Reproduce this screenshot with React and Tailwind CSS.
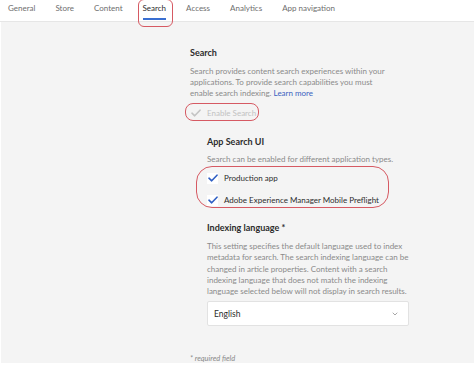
import { ChevronDown } from 'lucide-react';

const tabs = ['General', 'Store', 'Content', 'Search', 'Access', 'Analytics', 'App navigation'];

export default function App() {
    return (
        <div className="relative h-[366px] w-[474px] overflow-hidden bg-white text-[#2c2c2c]" style={{ fontFamily: 'Lato, "Open Sans", sans-serif' }}>
            <nav className="flex h-[22px] gap-[20px] border-b border-[#e6e6e6] pl-[8px] text-[8px] text-[#6e6e6e]">
                {tabs.map((tab) => (
                    <div key={tab} className="relative pt-[2px] leading-[12px]">
                        <span className={tab === 'Search' ? 'text-[#2c2c2c]' : ''}>{tab}</span>
                        {tab === 'Search' && <div className="absolute left-0 right-0 top-[18px] h-[2px] bg-[#3a6fd1]" />}
                    </div>
                ))}
            </nav>

            <main className="ml-[1px] h-[341px] bg-[#f4f4f4] pl-[189px] pt-[25px] text-[8px]">
                <h3 className="text-[9px] font-bold leading-[12px]">Search</h3>
                <p className="mt-[7px] leading-[11px] text-[#8a8a8a]">
                    Search provides content search experiences within your<br />
                    applications. To provide search capabilities you must<br />
                    enable search indexing. <span className="text-[#3b62c0]">Learn more</span>
                </p>
                <Check disabled label="Enable Search" className="mt-[8px]" />

                <div className="ml-[17px]">
                    <h4 className="mt-[17px] text-[9px] font-bold leading-[12px]">App Search UI</h4>
                    <p className="mt-[6px] leading-[11px] text-[#8a8a8a]">Search can be enabled for different application types.</p>
                    <Check label="Production app" className="mt-[7px]" />
                    <Check label="Adobe Experience Manager Mobile Preflight" className="mt-[10px]" />

                    <h4 className="mt-[16px] text-[9px] font-bold leading-[12px]">Indexing language *</h4>
                    <p className="mt-[7px] leading-[11.3px] text-[#8a8a8a]">
                        This setting specifies the default language used to index<br />
                        metadata for search. The search indexing language can be<br />
                        changed in article properties. Content with a search<br />
                        indexing language that does not match the indexing<br />
                        language selected below will not display in search results.
                    </p>
                    <div className="mt-[4px] flex h-[25px] w-[202px] items-center justify-between rounded-[2px] border border-[#e2e2e2] bg-white pl-[6px] pr-[9px]">
                        <span className="text-[8.5px]">English</span>
                        <ChevronDown size={8} strokeWidth={2} className="text-[#7a7a7a]" />
                    </div>
                </div>

                <p className="mt-[27px] text-[7.5px] italic leading-[12px] text-[#8a8a8a]">* required field</p>
            </main>

            <div className="pointer-events-none absolute left-[138px] top-[-1px] h-[28px] w-[35px] rounded-[6px] border border-[#d65a63]" />
            <div className="pointer-events-none absolute left-[185px] top-[103px] h-[18px] w-[74px] rounded-[8px] border border-[#d65a63]" />
            <div className="pointer-events-none absolute left-[196px] top-[166px] h-[42px] w-[193px] rounded-[16px] border border-[#d65a63]" />
        </div>
    );
}

function Check({ label, disabled, className }) {
    return (
        <div className={`flex h-[12px] items-center ${className}`}>
            <div className={`flex h-[11px] w-[11px] items-center justify-center ${disabled ? '' : 'bg-white'}`}>
                <svg width="10" height="8" viewBox="0 0 10 8" fill="none">
                    <path d="M1 4.2 L3.7 6.8 L9 1.2" stroke={disabled ? '#c4c4c4' : '#2f5fc4'} strokeWidth="1.6" strokeLinecap="round" strokeLinejoin="round" />
                </svg>
            </div>
            <span className={`ml-[6px] text-[8px] ${disabled ? 'text-[#c2c2c2]' : 'text-[#2c2c2c]'}`}>{label}</span>
        </div>
    );
}
